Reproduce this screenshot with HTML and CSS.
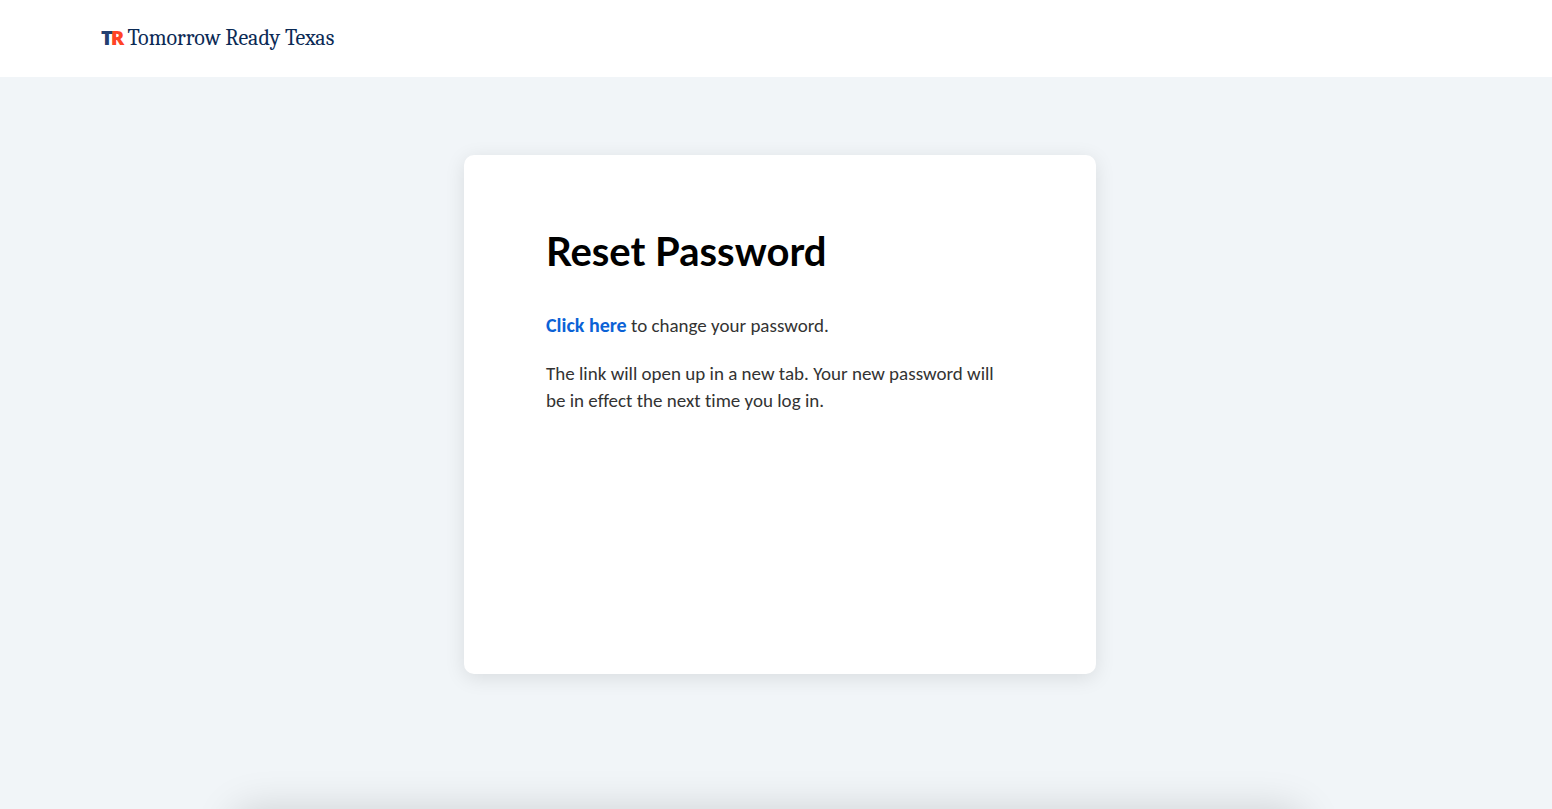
FILE: index.html
```html
<!DOCTYPE html>
<html lang="en">
<head>
    <meta charset="UTF-8">
    <meta name="viewport" content="width=device-width, initial-scale=1.0">
    <title>Reset Password - Tomorrow Ready Texas</title>
    <link rel="stylesheet" href="styles.css">
</head>
<body>
    <header class="site-header">
        <a class="logo" href="#">
            <span class="logo-mark"><span class="logo-t">T</span><span class="logo-r">R</span></span>
            <span class="logo-name">Tomorrow Ready Texas</span>
        </a>
    </header>

    <main class="content">
        <section class="card">
            <h1>Reset Password</h1>
            <p><a class="reset-link" href="#" target="_blank">Click here</a> to change your password.</p>
            <p>The link will open up in a new tab. Your new password will be in effect the next time you log in.</p>
        </section>
    </main>

    <!-- Notice drawer, closed below the window -->
    <div class="drawer"></div>
</body>
</html>
```

FILE: styles.css
```css
* {
    box-sizing: border-box;
}

body {
    font-family: Lato, sans-serif;
    background-color: #f1f5f8;
    color: #333;
    margin: 0;
    min-height: 100vh;
}

/* Header */
.site-header {
    display: flex;
    align-items: center;
    height: 77px;
    padding: 0 101px 2px;
    background-color: #fff;
}

.logo {
    display: flex;
    align-items: center;
    gap: 3px;
    color: #0b2a55;
    text-decoration: none;
    white-space: nowrap;
}

.logo-mark {
    display: flex;
    font-family: "Open Sans", sans-serif;
    font-size: 20px;
    font-weight: 800;
    line-height: 26px;
}

.logo-t {
    color: #233f70;
}

.logo-r {
    margin-left: -2px;
    color: #ff4326;
}

.logo-name {
    font-family: Cambria, "Noto Serif", "Liberation Serif", serif;
    font-size: 22px;
    line-height: 26px;
}

/* Card */
.content {
    padding: 78px 16px 78px 24px;
}

.card {
    max-width: 632px;
    min-height: 519px;
    margin: 0 auto;
    padding: 72px 82px;
    background-color: #fff;
    border-radius: 10px;
    box-shadow: 0 4px 20px rgba(0, 0, 0, 0.1);
}

h1 {
    margin: 0 0 37px;
    font-size: 40px;
    font-weight: 700;
    line-height: 48px;
    color: #000;
}

p {
    margin: 0 0 21px;
    font-family: Carlito, Lato, sans-serif;
    font-size: 19px;
    font-variant-ligatures: none;
    line-height: 27px;
}

.reset-link {
    color: #0b62d6;
    font-size: 20px;
    font-weight: 700;
    text-decoration: none;
}

.reset-link:hover {
    text-decoration: underline;
}

.drawer {
    position: fixed;
    top: 100%;
    left: 15%;
    right: 16%;
    height: 80px;
    border-radius: 20px;
    background-color: #fff;
    box-shadow: 0 0 40px rgba(0, 0, 0, 0.15);
}
```
